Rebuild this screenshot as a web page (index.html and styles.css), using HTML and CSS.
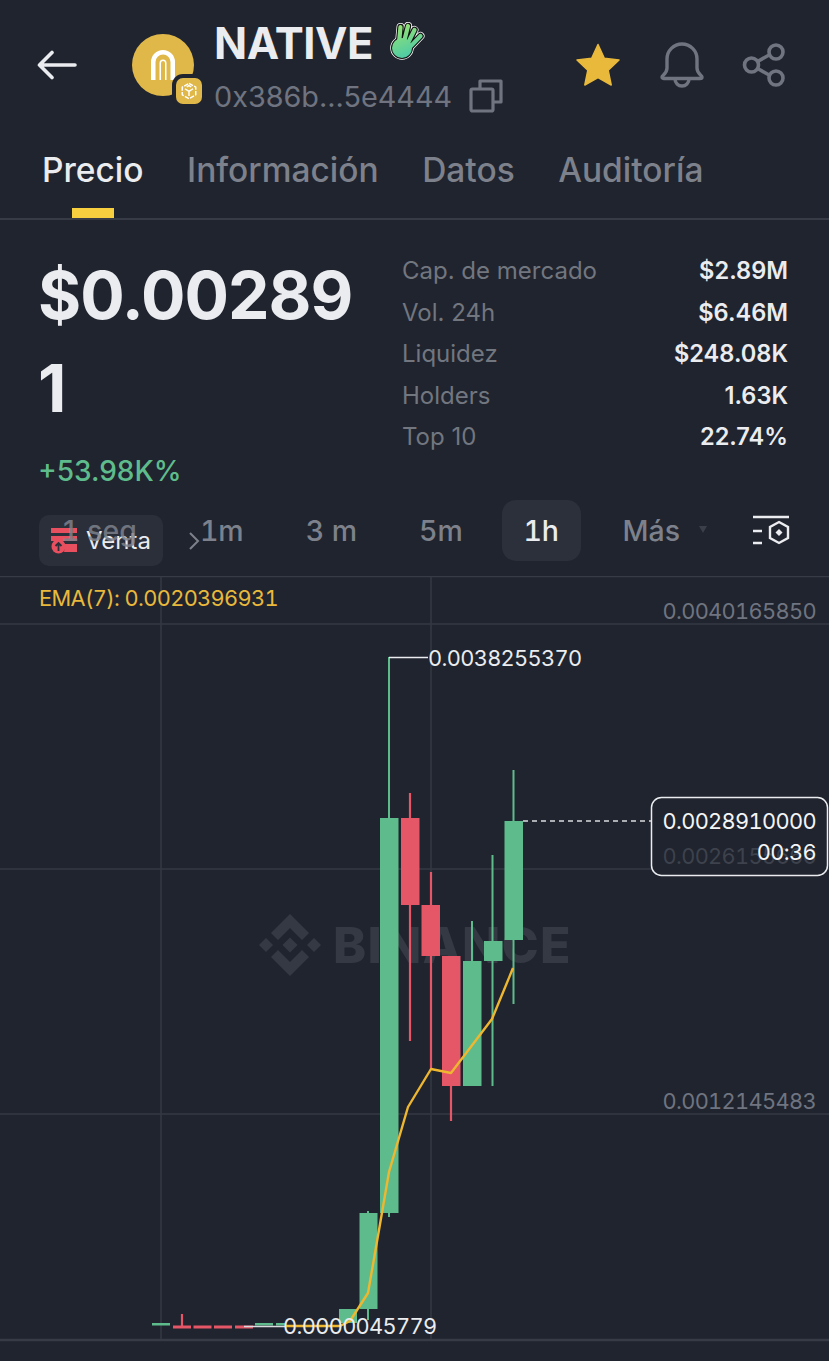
FILE: index.html
```html
<!DOCTYPE html>
<html lang="es">
<head>
    <meta charset="UTF-8">
    <title>NATIVE</title>
    <link rel="stylesheet" href="styles.css">
</head>

<body>
    <div id="page">
        <div class="header">
            <svg class="back" width="40" height="32" viewBox="0 0 40 32" fill="none" stroke="#eaecef" stroke-width="3.6" stroke-linecap="round" stroke-linejoin="round">
                <path d="M38 16H3M15 3.500L2.500 16L15 28.500"/>
            </svg>
            <div class="avatar">
                <svg width="62" height="62" viewBox="0 0 62 62">
                    <circle cx="31" cy="31" r="31" fill="#e0b84a"/>
                    <path d="M19 46V28a12 12 0 0 1 24 0v18h-4.500V28a7.500 7.500 0 0 0-15 0v18z" fill="#fff"/>
                    <path d="M27.500 46V29a3.500 3.500 0 0 1 7 0v17h-1.500V29a2 2 0 0 0-4 0v17z" fill="#fff"/>
                </svg>
                <div class="badge">
                    <svg width="18" height="18" viewBox="0 0 20 20" fill="none" stroke="#fff" stroke-width="1.600" stroke-linejoin="round">
                        <path d="M10 1.500L17.500 5.700V14.300L10 18.500L2.500 14.300V5.700z" stroke-dasharray="5 1.500"/>
                        <path d="M5.500 7.500L10 10.500L14.500 7.500M10 10.500V15.500M7.500 5.500L10 4L12.500 5.500"/>
                    </svg>
                </div>
            </div>
            <div class="token">
                <div class="token-name">
                    NATIVE
                    <svg class="hand" width="36" height="40" viewBox="0 0 36 40" fill="none" stroke-linecap="round">
                        <defs>
                            <linearGradient id="handFill" gradientUnits="userSpaceOnUse" x1="8" y1="6" x2="20" y2="36">
                                <stop offset="0" stop-color="#8fe077"/>
                                <stop offset="1" stop-color="#49c9a9"/>
                            </linearGradient>
                            <path id="handFingers" d="M9 21L10.500 5M14 20L18 4M18 21L24.500 8M20 25L30.500 14"/>
                            <ellipse id="handPalm" cx="12" cy="26" rx="10" ry="10"/>
                        </defs>
                        <use href="#handFingers" stroke="#fff" stroke-width="8"/>
                        <use href="#handPalm" stroke="#fff" stroke-width="3.500"/>
                        <use href="#handFingers" stroke="#111" stroke-width="6.500"/>
                        <use href="#handPalm" fill="#111" stroke="#111" stroke-width="2"/>
                        <use href="#handPalm" fill="url(#handFill)"/>
                        <use href="#handFingers" stroke="url(#handFill)" stroke-width="4.200"/>
                    </svg>
                </div>
                <div class="token-addr">
                    0x386b...5e4444
                    <svg width="34" height="34" viewBox="0 0 34 34" fill="none" stroke="#6f7480" stroke-width="3.200" stroke-linejoin="round">
                        <rect x="2" y="10" width="22" height="22" rx="1.500"/>
                        <path d="M11 9V2H32V23H25"/>
                    </svg>
                </div>
            </div>
            <div class="actions">
                <svg width="46" height="44" viewBox="0 0 46 44">
                    <path d="M23 1.500L29.300 15.200L44 17L33.200 27.300L36.200 42L23 34.700L9.800 42L12.800 27.300L2 17L16.700 15.200z" fill="#e9b93c" stroke="#e9b93c" stroke-width="1.500" stroke-linejoin="round"/>
                </svg>
                <svg width="44" height="46" viewBox="0 0 44 46" fill="none" stroke="#6f7480" stroke-width="3.400" stroke-linejoin="round" stroke-linecap="round">
                    <path d="M2 35c0-2 5-3 5-9V17a15 15 0 0 1 30 0v9c0 6 5 7 5 9 0 1-1 1.500-2 1.500H4c-1 0-2-.500-2-1.500z"/>
                    <path d="M15 37a7 7 0 0 0 14 0"/>
                </svg>
                <svg width="44" height="44" viewBox="0 0 44 44" fill="none" stroke="#6f7480" stroke-width="3.600">
                    <circle cx="9.500" cy="22" r="7"/>
                    <circle cx="34" cy="9" r="7"/>
                    <circle cx="34" cy="35" r="7"/>
                    <path d="M15.500 18.500L28 11.500M15.500 25.500L28 32.500"/>
                </svg>
            </div>
        </div>

        <div class="tabs">
            <div class="tab tab-active">Precio</div>
            <div class="tab">Información</div>
            <div class="tab">Datos</div>
            <div class="tab">Auditoría</div>
        </div>

        <div class="summary">
            <div class="price-col">
                <div class="price">$0.002891</div>
                <div class="change">+53.98K%</div>
            </div>
            <div class="stats">
                <div class="stat"><span>Cap. de mercado</span><b>$2.89M</b></div>
                <div class="stat"><span>Vol. 24h</span><b>$6.46M</b></div>
                <div class="stat"><span>Liquidez</span><b>$248.08K</b></div>
                <div class="stat"><span>Holders</span><b>1.63K</b></div>
                <div class="stat"><span>Top 10</span><b>22.74%</b></div>
            </div>
        </div>

        <div class="times">
            <div class="overlay">
                <div class="sell">
                    <svg width="27" height="26" viewBox="0 0 27 26">
                        <path d="M0 0H26V5H0zM0 8H26V13H0zM14 16H26V24H13z" fill="#e8505f"/>
                        <circle cx="7.500" cy="18.500" r="7" fill="#e8505f"/>
                        <path d="M7.500 23V15M4.500 18L7.500 15L10.500 18" fill="none" stroke="#2b2f3a" stroke-width="1.800"/>
                    </svg>
                    <span>Venta</span>
                </div>
                <svg class="chev" width="12" height="20" viewBox="0 0 12 20" fill="none" stroke="#7d818b" stroke-width="2">
                    <path d="M2 2L10 10L2 18"/>
                </svg>
            </div>
            <div class="time time-over">1 seg</div>
            <div class="time">1m</div>
            <div class="time">3 m</div>
            <div class="time">5m</div>
            <div class="time time-active">1h</div>
            <div class="time">Más<i class="more"></i></div>
            <svg class="chart-set" width="38" height="32" viewBox="0 0 38 32" fill="none" stroke="#eaecef" stroke-width="2.400">
                <path d="M1 2H37M1 16H10M1 28H10"/>
                <path d="M27 7L36 12V23L27 28L18 23V12z"/>
                <path d="M27 14L30.500 17.500L27 21L23.500 17.500z" fill="#eaecef" stroke="none"/>
            </svg>
        </div>

        <svg class="chart" width="829" height="785" viewBox="0 576 829 785">
            <!-- grid -->
            <g stroke="#333844" stroke-width="1.500">
                <path d="M0 624H829M0 869H829M0 1114H829"/>
                <path d="M161 577V1340M431 577V1340"/>
            </g>
            <path d="M0 576H829M0 1340H829" stroke="#363b46" stroke-width="2.500"/>

            <!-- watermark -->
            <g fill="#343944">
                <path d="M290 914L309 933L302 940L290 928L278 940L271 933z"/>
                <path d="M290 976L309 957L302 950L290 962L278 950L271 957z"/>
                <path d="M290 937.500L297.500 945L290 952.500L282.500 945z"/>
                <path d="M266 938L273 945L266 952L259 945z"/>
                <path d="M314 938L321 945L314 952L307 945z"/>
            </g>
            <text class="mark" x="333" y="963">BINANCE</text>

            <!-- candles -->
            <g stroke="#5ebc8c" stroke-width="2">
                <path d="M389 657V1217M368 1211V1320M472 921V1086M492.500 855V1086M513.500 770V1004"/>
            </g>
            <g stroke="#e55666" stroke-width="2.200">
                <path d="M410 793V1041M431 872V1069M451 956V1121M182 1314V1327"/>
            </g>
            <g fill="#5ebc8c">
                <rect x="152" y="1323" width="18" height="2.500"/>
                <rect x="255" y="1323" width="18" height="2.500"/>
                <rect x="276" y="1323" width="10" height="2.500"/>
                <rect x="339" y="1309" width="18" height="14"/>
                <rect x="359.500" y="1213" width="18" height="96"/>
                <rect x="380" y="818" width="18.500" height="395"/>
                <rect x="463" y="961" width="18.500" height="125"/>
                <rect x="484" y="941" width="18.500" height="20"/>
                <rect x="504.500" y="821" width="18.500" height="119"/>
            </g>
            <g fill="#e55666">
                <rect x="173" y="1325.500" width="18" height="3"/>
                <rect x="193.500" y="1325.500" width="18" height="3"/>
                <rect x="214" y="1325.500" width="18" height="3"/>
                <rect x="235" y="1325.500" width="18" height="3"/>
                <rect x="401" y="818" width="18.500" height="87"/>
                <rect x="421.500" y="905" width="18.500" height="51"/>
                <rect x="442" y="956" width="18.500" height="130"/>
            </g>

            <!-- min / max leaders -->
            <path d="M389 657.500H428" stroke="#eaecef" stroke-width="1.500" fill="none"/>
            <path d="M244 1326.500H285" stroke="#d9dbdf" stroke-width="1.500"/>
            <path d="M523 821H651" stroke="#d9dbdf" stroke-width="1.500" stroke-dasharray="5 4"/>

            <!-- EMA -->
            <polyline points="285,1326 340,1326 350,1321 368,1293 379,1230 389,1172 408,1107 431,1069 451,1073 492,1019 513,968" fill="none" stroke="#eeb72f" stroke-width="2.400" stroke-linejoin="round"/>

            <!-- labels -->
            <text class="ema" x="39" y="606">EMA(7): 0.0020396931</text>
            <text class="axis" x="816" y="619">0.0040165850</text>
            <text class="axis" x="816" y="1109">0.0012145483</text>
            <text class="peak" x="428" y="666">0.0038255370</text>
            <text class="peak" x="283" y="1334">0.0000045779</text>

            <rect x="651.500" y="797.500" width="176" height="78" rx="10" fill="#20242e" stroke="#eaecef" stroke-width="1.500"/>
            <text class="axis dim" x="816" y="864">0.0026155666</text>
            <text class="now" x="816" y="829">0.0028910000</text>
            <text class="now" x="816" y="860">00:36</text>
        </svg>
    </div>
</body>

</html>
```
FILE: styles.css
```css
html,
body {
    margin: 0;
    padding: 0;
    background: #20242e;
}

#page {
    width: 829px;
    height: 1361px;
    overflow: hidden;
    font-family: Inter, "Noto Sans", sans-serif;
    color: #eaecef;
}

.header {
    height: 130px;
    display: flex;
    align-items: flex-start;
    box-sizing: border-box;
}

.back {
    margin: 49px 0 0 37px;
}

.avatar {
    position: relative;
    width: 62px;
    height: 62px;
    margin: 34px 0 0 55px;
}

.avatar > svg {
    display: block;
}

.badge {
    position: absolute;
    left: 44px;
    top: 44px;
    width: 26px;
    height: 26px;
    display: flex;
    align-items: center;
    justify-content: center;
    background: #e0b84a;
    border-radius: 7px;
    box-shadow: 0 0 0 4px #20242e;
}

.token {
    margin: 18px 0 0 20px;
    width: 300px;
}

.token-name {
    display: flex;
    align-items: center;
    gap: 17px;
    height: 50px;
    font-size: 43.5px;
    font-weight: 700;
    letter-spacing: -0.5px;
}

.hand {
    margin-top: -3px;
}

.token-addr {
    display: flex;
    align-items: center;
    gap: 17px;
    height: 50px;
    margin-top: 3px;
    font-size: 28.800px;
    color: #6f7480;
}

.actions {
    margin: 42px 0 0 61px;
    display: flex;
    align-items: center;
    gap: 38.500px;
}

.tabs {
    height: 88px;
    display: flex;
    gap: 43.500px;
    padding-left: 42px;
    border-bottom: 2px solid #363b46;
}

.tab {
    position: relative;
    padding-top: 20px;
    font-size: 33.500px;
    font-weight: 500;
    color: #7d818b;
}

.tab-active {
    color: #eaecef;
}

.tab-active::after {
    content: "";
    position: absolute;
    left: 30px;
    bottom: 0;
    width: 42px;
    height: 10px;
    background: #f7cf3f;
}

.summary {
    display: flex;
    height: 280px;
    box-sizing: border-box;
    padding: 29px 41px 0 38px;
}

.price-col {
    width: 364px;
}

.price {
    width: 330px;
    font-size: 66px;
    line-height: 93px;
    font-weight: 700;
    word-break: break-all;
    letter-spacing: -1px;
}

.change {
    margin-top: 19px;
    font-size: 28px;
    font-weight: 500;
    color: #5ebc8c;
}

.stats {
    flex: 1;
    margin-top: 1px;
}

.stat {
    display: flex;
    justify-content: space-between;
    align-items: center;
    height: 41.5px;
    font-size: 24px;
    color: #72767f;
}

.stat b {
    font-size: 23.600px;
    font-weight: 600;
    color: #eaecef;
}

.times {
    position: relative;
    display: flex;
    align-items: center;
    gap: 16px;
    height: 61px;
    padding: 0 0 15px 38px;
}

.time {
    position: relative;
    height: 61px;
    line-height: 61px;
    padding: 0 23px;
    font-size: 28.500px;
    font-weight: 500;
    font-variant-numeric: tabular-nums;
    color: #7d818b;
    border-radius: 14px;
}

.time-over {
    color: rgba(125, 129, 139, 0.85);
    margin-right: 1px;
}

.time-active {
    padding: 0 21.500px;
    margin-right: 3px;
    background: #2b303b;
    color: #eaecef;
}

.more {
    position: absolute;
    right: -4px;
    top: 26px;
    width: 0;
    height: 0;
    border-left: 4px solid transparent;
    border-right: 4px solid transparent;
    border-top: 7px solid #3a3f4a;
}

.chart-set {
    position: relative;
    margin-left: 33px;
}

.overlay {
    position: absolute;
    left: 39px;
    top: 15px;
    display: flex;
    align-items: center;
    gap: 25px;
}

.sell {
    display: flex;
    align-items: center;
    gap: 8px;
    box-sizing: border-box;
    width: 124px;
    height: 51px;
    padding-left: 12px;
    background: #2b2f3a;
    border-radius: 10px;
    font-size: 24px;
    color: #eaecef;
}

.chart {
    display: block;
}

.chart text {
    font-family: Inter, "Noto Sans", sans-serif;
    font-size: 21.800px;
    font-variant-numeric: tabular-nums;
    letter-spacing: -0.650px;
}

.chart .mark {
    font-size: 50px;
    font-weight: 800;
    letter-spacing: 1.200px;
    fill: #343944;
}

.chart .ema {
    fill: #e9b93c;
}

.chart .axis {
    fill: #6f7480;
    text-anchor: end;
}

.chart .dim {
    fill: #3d424d;
}

.chart .peak {
    fill: #eaecef;
}

.chart .now {
    fill: #f4f5f6;
    text-anchor: end;
}
```
